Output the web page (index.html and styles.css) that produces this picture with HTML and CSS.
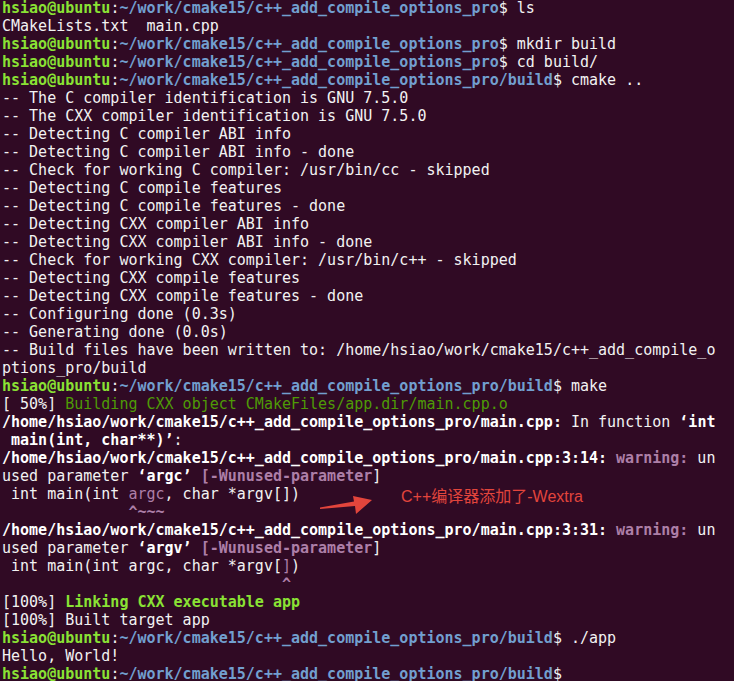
FILE: index.html
```html
<!DOCTYPE html>
<html lang="en">
<head>
<meta charset="utf-8">
<title>Terminal</title>
<link rel="stylesheet" href="styles.css">
</head>
<body>
<div class="term">
<pre class="out"><span class="u">hsiao@ubuntu</span>:<span class="p">~/work/cmake15/c++_add_compile_options_pro</span>$ ls
CMakeLists.txt  main.cpp
<span class="u">hsiao@ubuntu</span>:<span class="p">~/work/cmake15/c++_add_compile_options_pro</span>$ mkdir build
<span class="u">hsiao@ubuntu</span>:<span class="p">~/work/cmake15/c++_add_compile_options_pro</span>$ cd build/
<span class="u">hsiao@ubuntu</span>:<span class="p">~/work/cmake15/c++_add_compile_options_pro/build</span>$ cmake ..
-- The C compiler identification is GNU 7.5.0
-- The CXX compiler identification is GNU 7.5.0
-- Detecting C compiler ABI info
-- Detecting C compiler ABI info - done
-- Check for working C compiler: /usr/bin/cc - skipped
-- Detecting C compile features
-- Detecting C compile features - done
-- Detecting CXX compiler ABI info
-- Detecting CXX compiler ABI info - done
-- Check for working CXX compiler: /usr/bin/c++ - skipped
-- Detecting CXX compile features
-- Detecting CXX compile features - done
-- Configuring done (0.3s)
-- Generating done (0.0s)
-- Build files have been written to: /home/hsiao/work/cmake15/c++_add_compile_o
ptions_pro/build
<span class="u">hsiao@ubuntu</span>:<span class="p">~/work/cmake15/c++_add_compile_options_pro/build</span>$ make
[ 50%] <span class="g">Building CXX object CMakeFiles/app.dir/main.cpp.o</span>
<span class="b">/home/hsiao/work/cmake15/c++_add_compile_options_pro/main.cpp:</span> In function <span class="b">‘int</span>
<span class="b"> main(int, char**)’</span>:
<span class="b">/home/hsiao/work/cmake15/c++_add_compile_options_pro/main.cpp:3:14:</span> <span class="m">warning:</span> un
used parameter <span class="b">‘argc’</span> <span class="m">[-Wunused-parameter</span>]
 int main(int <span class="mn">argc</span>, char *argv[])
              <span class="m">^~~~</span>
<span class="b">/home/hsiao/work/cmake15/c++_add_compile_options_pro/main.cpp:3:31:</span> <span class="m">warning:</span> un
used parameter <span class="b">‘argv’</span> <span class="m">[-Wunused-parameter</span>]
 int main(int argc, char *argv[<span class="mn">]</span>)
                               <span class="m">^</span>
[100%] <span class="lg">Linking CXX executable app</span>
[100%] Built target app
<span class="u">hsiao@ubuntu</span>:<span class="p">~/work/cmake15/c++_add_compile_options_pro/build</span>$ ./app
Hello, World!
<span class="u">hsiao@ubuntu</span>:<span class="p">~/work/cmake15/c++_add_compile_options_pro/build</span>$</pre>
<svg class="arrow" width="60" height="24" viewBox="0 0 60 24" aria-hidden="true">
  <polygon points="0,15.5 34,9.5 33,4 52,8 36,22 35,14 0,17" fill="#e2453c"/>
</svg>
<div class="note">C++编译器添加了-Wextra</div>
</div>
</body>
</html>
```
FILE: styles.css
```css
html, body {
  margin: 0;
  padding: 0;
  background: #300a24;
}
.term {
  position: relative;
  width: 734px;
  height: 681px;
  overflow: hidden;
  background: #300a24;
}
.out {
  margin: -1px 0 0 0;
  padding: 0 0 0 2px;
  font-family: "DejaVu Sans Mono", monospace;
  font-size: 15px;
  line-height: 18px;
  color: #f2f2f2;
  white-space: pre;
}
.u { color: #8ae234; font-weight: bold; }
.p { color: #729fcf; font-weight: bold; }
.b { color: #ffffff; font-weight: bold; }
.g { color: #4e9a06; }
.lg { color: #8ae234; font-weight: bold; }
.m { color: #ad7fa8; font-weight: bold; }
.mn { color: #ad7fa8; }
.arrow {
  position: absolute;
  left: 320px;
  top: 492px;
}
.note {
  position: absolute;
  left: 401px;
  top: 489px;
  font-family: "Liberation Sans", "Noto Sans CJK SC", sans-serif;
  font-size: 16px;
  line-height: 16px;
  color: #e2453c;
  white-space: nowrap;
}
```
